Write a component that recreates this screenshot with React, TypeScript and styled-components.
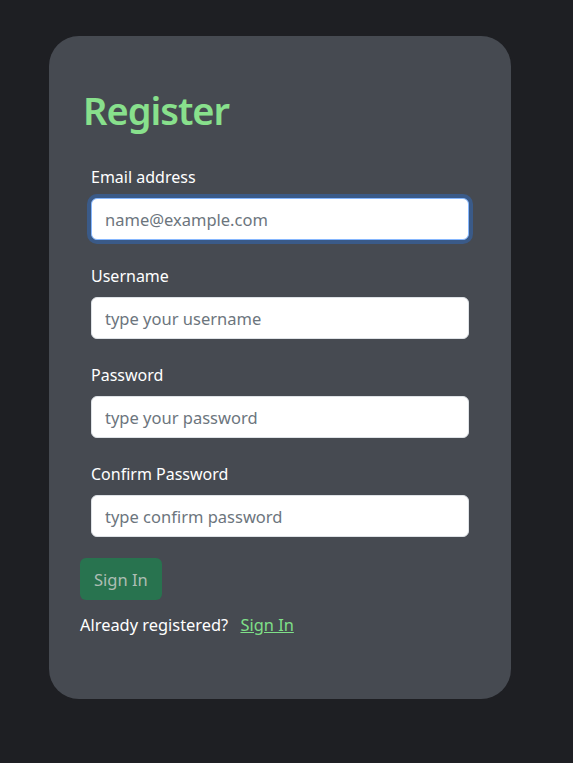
import styled, { createGlobalStyle } from "styled-components";

const GlobalStyle = createGlobalStyle`
  * {
    box-sizing: border-box;
  }
  body {
    margin: 0;
    background-color: #1e1f23;
    font-family: "Noto Sans", "Open Sans", sans-serif;
    color: #ffffff;
  }
`;

const Page = styled.div`
  min-height: 763px;
  padding: 36px 0 0 49px;
`;

const Card = styled.div`
  width: 462px;
  height: 663px;
  background-color: #464a51;
  border-radius: 30px;
  padding: 50px 31px 0;
`;

const Title = styled.h1`
  margin: 0 0 31px 3px;
  font-size: 38px;
  line-height: 48px;
  font-weight: 600;
  letter-spacing: -1px;
  color: #88e08c;
`;

const Form = styled.form`
  display: flex;
  flex-direction: column;
`;

const FieldGroup = styled.div`
  padding: 0 11px;
  margin-bottom: 24px;

  &:last-of-type {
    margin-bottom: 21px;
  }
`;

const Label = styled.label`
  display: block;
  font-size: 16px;
  line-height: 24px;
  margin-bottom: 9px;
  color: #ffffff;
`;

const Input = styled.input<{ $focused?: boolean }>`
  display: block;
  width: 100%;
  height: 42px;
  padding: 0 13px;
  font-family: inherit;
  font-size: 16.5px;
  color: #212529;
  background-color: #ffffff;
  border: 1px solid ${(p) => (p.$focused ? "#86b7fe" : "#dee2e6")};
  border-radius: 6px;
  outline: none;
  box-shadow: ${(p) => (p.$focused ? "0 0 0 4px #3a5a88" : "none")};

  &::placeholder {
    color: #6c757d;
  }
`;

const SubmitButton = styled.button`
  align-self: flex-start;
  height: 42px;
  padding: 0 14px;
  border: none;
  border-radius: 6px;
  background-color: #28734f;
  color: #aebdb4;
  font-family: inherit;
  font-size: 16.5px;
`;

const Footer = styled.p`
  margin: 13px 0 0;
  font-size: 16.4px;
  line-height: 24px;
  color: #ffffff;
`;

const SignInLink = styled.a`
  margin-left: 8px;
  color: #7fe088;
  text-decoration: underline;
`;

const fields = [
  { id: "email", label: "Email address", type: "email", placeholder: "name@example.com" },
  { id: "username", label: "Username", type: "text", placeholder: "type your username" },
  { id: "password", label: "Password", type: "password", placeholder: "type your password" },
  { id: "confirm", label: "Confirm Password", type: "password", placeholder: "type confirm password" },
];

function App() {
  return (
    <>
      <GlobalStyle />
      <Page>
        <Card>
          <Title>Register</Title>
          <Form onSubmit={(e) => e.preventDefault()}>
            {fields.map((field, i) => (
              <FieldGroup key={field.id}>
                <Label htmlFor={field.id}>{field.label}</Label>
                <Input
                  id={field.id}
                  type={field.type}
                  placeholder={field.placeholder}
                  $focused={i === 0}
                />
              </FieldGroup>
            ))}
            <SubmitButton type="submit">Sign In</SubmitButton>
          </Form>
          <Footer>
            Already registered? <SignInLink href="#">Sign In</SignInLink>
          </Footer>
        </Card>
      </Page>
    </>
  );
}

export default App;
